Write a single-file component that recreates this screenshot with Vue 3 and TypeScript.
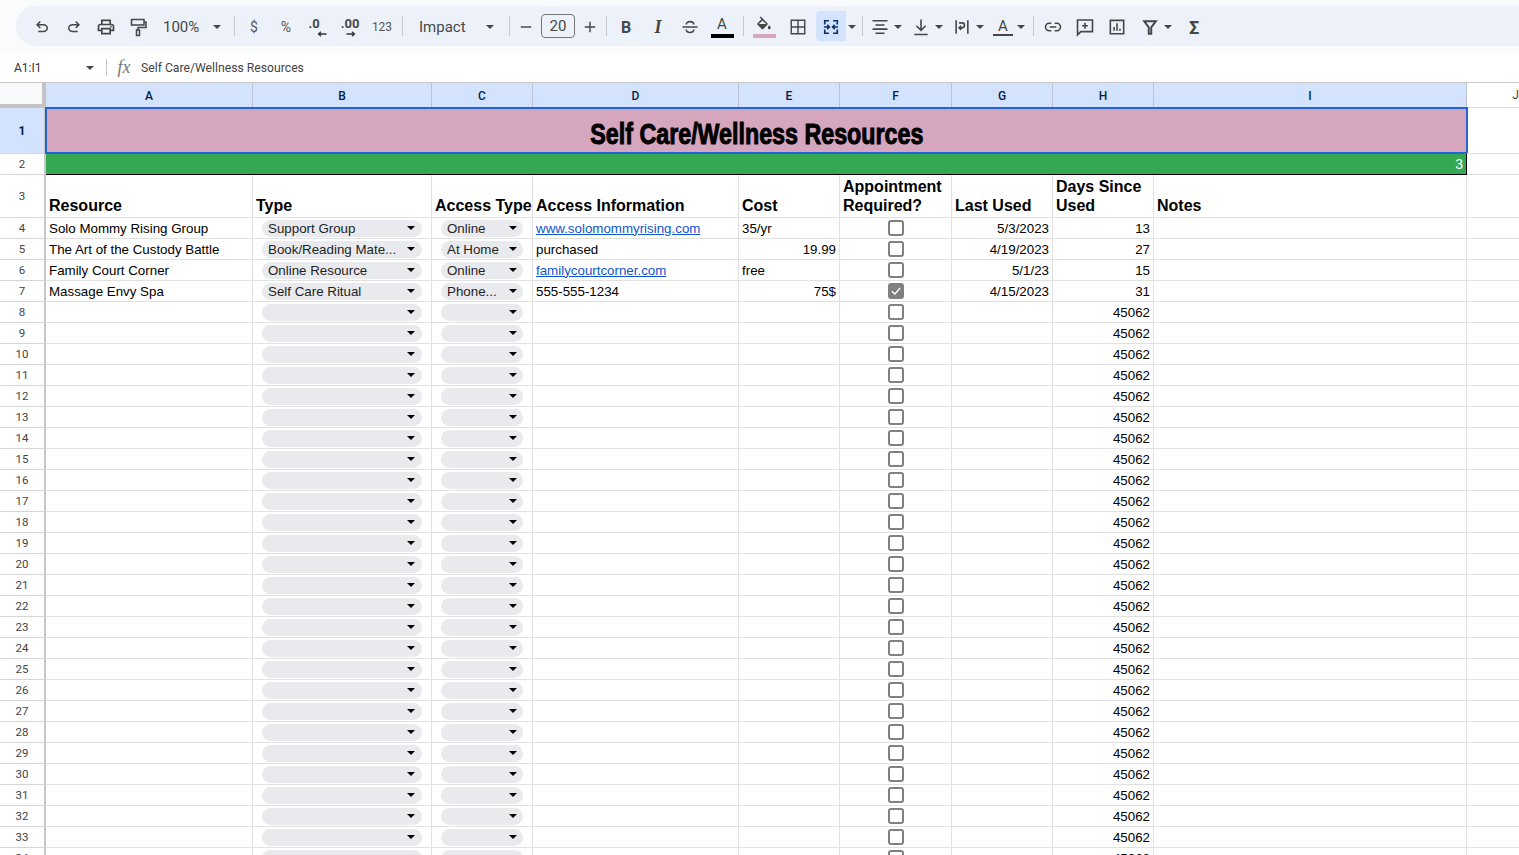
<script setup lang="ts">
interface Row {
  n: number
  a?: string
  b?: string
  c?: string
  d?: string
  link?: boolean
  e?: string
  eRight?: boolean
  checked?: boolean
  g?: string
  h: string
}

const ICON_UNDO = 'M280-200v-80h284q63 0 109.5-40T720-420q0-60-46.5-100T564-560H312l104 104-56 56-200-200 200-200 56 56-104 104h252q97 0 166.5 63T800-420q0 94-69.5 157T564-200H280Z'
const ICON_PRINT = 'M640-640v-120H320v120h-80v-200h480v200h-80Zm-480 80h640-640Zm560 100q17 0 28.5-11.5T760-500q0-17-11.5-28.5T720-540q-17 0-28.5 11.5T680-500q0 17 11.5 28.5T720-460Zm-80 260v-160H320v160h320Zm80 80H240v-160H80v-240q0-51 35-85.5t85-34.5h560q51 0 85.5 34.5T880-520v240H720v160Zm80-240v-160q0-17-11.5-28.5T760-560H200q-17 0-28.5 11.5T160-520v160h80v-80h480v80h80Z'
const ICON_FILL = 'M16.56 8.94L7.62 0 6.21 1.41l2.38 2.38-5.15 5.15c-.59.59-.59 1.54 0 2.12l5.5 5.5c.29.29.68.44 1.06.44s.77-.15 1.06-.44l5.5-5.5c.59-.58.59-1.53 0-2.12zM5.21 10L10 5.21 14.79 10H5.21zM19 11.5s-2 2.17-2 3.5c0 1.1.9 2 2 2s2-.9 2-2c0-1.33-2-3.5-2-3.5z'

const columns = ['A', 'B', 'C', 'D', 'E', 'F', 'G', 'H', 'I', 'J']

const filled: Row[] = [
  { n: 4, a: 'Solo Mommy Rising Group', b: 'Support Group', c: 'Online', d: 'www.solomommyrising.com', link: true, e: '35/yr', g: '5/3/2023', h: '13' },
  { n: 5, a: 'The Art of the Custody Battle', b: 'Book/Reading Mate...', c: 'At Home', d: 'purchased', e: '19.99', eRight: true, g: '4/19/2023', h: '27' },
  { n: 6, a: 'Family Court Corner', b: 'Online Resource', c: 'Online', d: 'familycourtcorner.com', link: true, e: 'free', g: '5/1/23', h: '15' },
  { n: 7, a: 'Massage Envy Spa', b: 'Self Care Ritual', c: 'Phone...', d: '555-555-1234', e: '75$', eRight: true, checked: true, g: '4/15/2023', h: '31' },
]
const empty: Row[] = Array.from({ length: 27 }, (_, i) => ({ n: i + 8, h: '45062' }))
const rows: Row[] = [...filled, ...empty]
</script>

<template>
  <div class="app">
    <div class="top">
      <div class="toolbar">
        <button class="btn"><svg class="s18" viewBox="0 -960 960 960"><path class="solid" :d="ICON_UNDO" /></svg></button>
        <button class="btn"><svg class="s18 flip" viewBox="0 -960 960 960"><path class="solid" :d="ICON_UNDO" /></svg></button>
        <button class="btn"><svg class="s20" viewBox="0 -960 960 960"><path class="solid" :d="ICON_PRINT" /></svg></button>
        <button class="btn">
          <svg class="s24" viewBox="0 0 24 24"><path class="line fine" d="M5.500 4.500h12.500v5.500H5.500zM18 7h2v5.500h-8v2.500M10.500 15h3v5.500h-3z" /></svg>
        </button>
        <div class="select zoom"><span>100%</span><i class="caret" /></div>
        <span class="sep" />
        <button class="btn label">$</button>
        <button class="btn label">%</button>
        <button class="btn dec dec-less"><span>.0</span><svg viewBox="0 0 10 6"><path class="line thin" d="M9.500 3H1.500M4 .8 1.500 3 4 5.200" /></svg></button>
        <button class="btn dec"><span>.00</span><svg viewBox="0 0 10 6"><path class="line thin" d="M.5 3h8M6 .8 8.500 3 6 5.200" /></svg></button>
        <button class="btn label small">123</button>
        <span class="sep" />
        <div class="select font"><span>Impact</span><i class="caret" /></div>
        <span class="sep" />
        <button class="step"><svg class="s18" viewBox="0 0 24 24"><path class="line" d="M5 12h14" /></svg></button>
        <div class="size">20</div>
        <button class="step"><svg class="s18" viewBox="0 0 24 24"><path class="line" d="M5 12h14M12 5v14" /></svg></button>
        <span class="sep tight" />
        <button class="btn glyph bold">B</button>
        <button class="btn glyph italic">I</button>
        <button class="btn"><svg class="s20" viewBox="0 0 24 24"><path class="line" d="M3 12h18M7.500 9c0-2 2-3.500 4.500-3.500s4.500 1.500 4.500 3.500M7.500 15c0 2 2 3.500 4.500 3.500s4.500-1.500 4.500-3.500" /></svg></button>
        <button class="btn colored"><span class="color-a">A</span><i class="bar black" /></button>
        <span class="sep wide" />
        <button class="btn colored"><svg class="s18" viewBox="0 0 24 20"><path class="solid" :d="ICON_FILL" /></svg><i class="bar pink" /></button>
        <button class="btn borders"><svg class="s18" viewBox="0 0 24 24"><path class="line" d="M3 3h18v18H3zM12 3v18M3 12h18" /></svg></button>
        <button class="merge"><svg class="s20" viewBox="0 0 24 24"><path class="line navy" d="M9.500 4.500H4.500v4.500M4.500 15v4.500h5M14.500 4.500h5v4.500M19.500 15v4.500h-5M3.500 12h6.500M7.500 9.500 10 12l-2.500 2.500M20.500 12H14M16.500 9.500 14 12l2.500 2.500" /></svg></button>
        <button class="caret-btn"><i class="caret" /></button>
        <span class="sep flush" />
        <button class="menu"><svg class="s20" viewBox="0 0 24 24"><path class="line" d="M3 4.500h18M6.500 9.500h11M3 14.500h18M6.500 19.500h11" /></svg><i class="caret" /></button>
        <button class="menu"><svg class="s20" viewBox="0 0 24 24"><path class="line" d="M12 3v13M6.500 10.500 12 16l5.500-5.500M4 21h16" /></svg><i class="caret" /></button>
        <button class="menu"><svg class="s20" viewBox="0 0 24 24"><path class="line" d="M5 4v16M19 4v16M8.500 7H12a3 3 0 0 1 0 6H9M11 10.500 8.500 13l2.500 2.500" /></svg><i class="caret" /></button>
        <button class="menu"><span class="rotate">A</span><i class="caret" /></button>
        <span class="sep last" />
        <button class="btn"><svg class="s20" viewBox="0 0 24 24"><path class="line" d="M10 7.500H7.500a4.500 4.500 0 0 0 0 9H10M14 7.500h2.500a4.500 4.500 0 0 1 0 9H14M8 12h8" /></svg></button>
        <button class="btn"><svg class="s20" viewBox="0 0 24 24"><path class="line" d="M3 3.500h18v14H7l-4 4zM12 7v7M8.500 10.500h7" /></svg></button>
        <button class="btn"><svg class="s20" viewBox="0 0 24 24"><path class="line" d="M4 4h16v16H4zM8.500 16.500V12M12 16.500v-9M15.500 16.500V14" /></svg></button>
        <button class="menu"><svg class="s20" viewBox="0 0 24 24"><path class="line heavy" d="M5 5h14l-5.500 7.500V20h-3v-7.500z" /></svg><i class="caret" /></button>
        <button class="btn glyph sigma">Σ</button>
      </div>
    </div>

    <div class="formula">
      <div class="namebox"><span>A1:I1</span><i class="caret" /></div>
      <span class="formula-sep" />
      <span class="fx">fx</span>
      <span class="formula-text">Self Care/Wellness Resources</span>
    </div>

    <div class="sheet">
      <div class="grid head">
        <div class="corner" />
        <div v-for="c in columns" :key="c" class="col-head" :class="{ off: c === 'J' }">{{ c }}</div>
      </div>

      <div class="grid r1">
        <div class="row-head active">1</div>
        <div class="title-cell"><span class="title">Self Care/Wellness Resources</span></div>
        <div class="cell" />
      </div>

      <div class="grid r2">
        <div class="row-head">2</div>
        <div class="green-cell">3</div>
        <div class="cell" />
      </div>

      <div class="grid r3">
        <div class="row-head">3</div>
        <div class="cell th">Resource</div>
        <div class="cell th">Type</div>
        <div class="cell th">Access Type</div>
        <div class="cell th">Access Information</div>
        <div class="cell th">Cost</div>
        <div class="cell th">Appointment<br />Required?</div>
        <div class="cell th">Last Used</div>
        <div class="cell th">Days Since<br />Used</div>
        <div class="cell th">Notes</div>
        <div class="cell" />
      </div>

      <div v-for="r in rows" :key="r.n" class="grid row">
        <div class="row-head">{{ r.n }}</div>
        <div class="cell">{{ r.a }}</div>
        <div class="cell chip-cell"><div class="chip chip-b"><span>{{ r.b }}</span><i class="caret dark" /></div></div>
        <div class="cell chip-cell"><div class="chip chip-c"><span>{{ r.c }}</span><i class="caret dark" /></div></div>
        <div class="cell"><a v-if="r.link" class="link">{{ r.d }}</a><template v-else>{{ r.d }}</template></div>
        <div class="cell" :class="{ right: r.eRight }">{{ r.e }}</div>
        <div class="cell center">
          <span class="check" :class="{ on: r.checked }">
            <svg v-if="r.checked" viewBox="0 0 16 16"><path d="M2.500 8.200 6.500 12 13.500 4" /></svg>
          </span>
        </div>
        <div class="cell right">{{ r.g }}</div>
        <div class="cell right">{{ r.h }}</div>
        <div class="cell" />
        <div class="cell" />
      </div>
    </div>
  </div>
</template>

<style scoped>
.app {
  width: 1519px;
  height: 855px;
  overflow: hidden;
  background: #fff;
  font-family: "Liberation Sans", Arial, sans-serif;
  color: #000;
}

/* toolbar */
.top {
  height: 53px;
  box-sizing: border-box;
  padding: 6px 0 7px 16px;
  background: #f9fbfd;
}
.toolbar {
  height: 40px;
  box-sizing: border-box;
  padding-left: 10px;
  display: flex;
  align-items: center;
  background: #edf2fa;
  border-radius: 20px 0 0 20px;
  color: #444746;
  font-family: Roboto, sans-serif;
}
button {
  border: 0;
  padding: 0;
  margin: 0;
  background: none;
  color: inherit;
  font: inherit;
}
.btn {
  flex: none;
  box-sizing: border-box;
  width: 32px;
  height: 30px;
  padding-top: 2px;
  display: flex;
  align-items: center;
  justify-content: center;
}
.s18 { width: 18px; height: 18px; display: block; }
.s20 { width: 20px; height: 20px; display: block; }
.s24 { width: 24px; height: 24px; display: block; }
.flip { transform: scaleX(-1); }
.solid { fill: #444746; }
.line {
  fill: none;
  stroke: #444746;
  stroke-width: 1.900;
}
.line.fine { stroke-width: 1.500; }
.line.thin { stroke-width: 1.300; stroke: #333; }
.line.heavy { stroke-width: 2.300; }
.line.navy { stroke: #0b2f6b; stroke-width: 2; }
.caret {
  display: block;
  flex: none;
  width: 0;
  height: 0;
  border-left: 4px solid transparent;
  border-right: 4px solid transparent;
  border-top: 4px solid #444746;
}
.caret.dark { border-top-color: #000; }
.select {
  flex: none;
  box-sizing: border-box;
  height: 30px;
  padding-top: 2px !important;
  display: flex;
  align-items: center;
  justify-content: space-between;
  font-size: 15px;
}
.zoom { width: 76px; padding: 0 9px; }
.font { width: 99px; padding: 0 11px 0 13px; }
.sep {
  flex: none;
  width: 1px;
  height: 20px;
  margin: 0 3px 0 4px;
  background: #c7c9cc;
}
.sep.tight { margin: 0 3px; }
.sep.wide { margin: 0 4px 0 5px; }
.sep.flush { margin: 0 0 0 4px; }
.sep.last { margin: 0 3px 0 6px; }
.label { font-size: 14px; color: #555; }
.label.small { font-size: 12px; }
.dec {
  flex-direction: column;
  font-size: 13px;
  font-weight: 700;
  line-height: 11px;
  color: #444746;
}
.dec svg { width: 10px; height: 6px; display: block; margin: 2px 0 0 2px; }
.dec-less span { margin-right: 8px; }
.dec-less svg { margin-left: 8px; }
.step {
  flex: none;
  box-sizing: border-box;
  width: 26px;
  height: 30px;
  padding-top: 2px;
  display: flex;
  align-items: center;
  justify-content: center;
}
.size {
  flex: none;
  box-sizing: border-box;
  width: 34px;
  height: 24px;
  margin: 0 2px;
  border: 1px solid #747775;
  border-radius: 4px;
  display: flex;
  align-items: center;
  justify-content: center;
  font-size: 15px;
}
.glyph { font-size: 16px; }
.bold { font-weight: 700; font-family: Roboto, sans-serif; }
.italic {
  font: italic 700 18px "Liberation Serif", serif;
}
.sigma { margin-left: 4px; font-size: 18px; font-weight: 700; }
.colored {
  flex-direction: column;
  justify-content: flex-start;
  padding-top: 4px;
}
.color-a { font-size: 15px; line-height: 18px; font-weight: 400; }
.bar { display: block; width: 23px; height: 4px; margin-top: 1px; }
.bar.black { background: #000; }
.bar.pink { background: #d5a6bd; }
.borders { margin-left: 2px; }
.merge {
  flex: none;
  box-sizing: border-box;
  width: 30px;
  height: 30px;
  margin-left: 2px;
  padding-top: 2px;
  display: flex;
  align-items: center;
  justify-content: center;
  background: #d3e3fd;
  border-radius: 4px 0 0 4px;
}
.caret-btn {
  flex: none;
  box-sizing: border-box;
  width: 12px;
  height: 30px;
  padding-top: 2px;
  display: flex;
  align-items: center;
  justify-content: center;
}
.menu {
  flex: none;
  width: 41px;
  height: 30px;
  box-sizing: border-box;
  padding: 2px 0 0 7px;
  display: flex;
  align-items: center;
}
.menu .caret { margin-left: 4px; }
.rotate {
  width: 20px;
  text-align: center;
  font-size: 15px;
  line-height: 16px;
  font-weight: 400;
  border-bottom: 2px solid #444746;
  box-sizing: border-box;
  padding: 0 3px;
}

/* formula bar */
.formula {
  height: 30px;
  box-sizing: border-box;
  border-bottom: 1px solid #c7c7c7;
  display: flex;
  align-items: center;
  background: #fff;
  font-family: Roboto, sans-serif;
}
.namebox {
  flex: none;
  box-sizing: border-box;
  width: 106px;
  padding: 0 12px 0 14px;
  display: flex;
  align-items: center;
  justify-content: space-between;
  font-size: 12px;
  color: #333;
}
.formula-sep { flex: none; width: 1px; height: 17px; background: #c7c7c7; }
.fx {
  flex: none;
  width: 34px;
  text-align: center;
  font: italic 18px "Liberation Serif", serif;
  color: #777;
}
.formula-text { font-size: 12.200px; color: #444; }

/* grid */
.sheet { width: 1564px; }
.grid {
  display: grid;
  grid-template-columns: 46px 207px 179px 101px 206px 101px 112px 101px 101px 313px 97px;
}
.head { height: 25px; }
.r1 { height: 46px; }
.r2 { height: 21px; }
.r3 { height: 43px; }
.row { height: 21px; }

.corner {
  box-sizing: border-box;
  background: #f8f9fa;
  border-right: 4px solid #c4c4c4;
  border-bottom: 4px solid #c4c4c4;
}
.col-head {
  display: flex;
  align-items: center;
  justify-content: center;
  box-sizing: border-box;
  background: #d3e3fd;
  border-right: 1px solid #b9c3d2;
  font-family: Roboto, sans-serif;
  font-size: 12px;
  font-weight: 500;
  color: #041e49;
}
.col-head.off {
  background: #fff;
  border-right: 0;
  border-bottom: 1px solid #e1e1e1;
  font-weight: 400;
  color: #444;
}
.row-head {
  display: flex;
  align-items: center;
  justify-content: center;
  box-sizing: border-box;
  background: #fff;
  border-right: 2px solid #c7c7c7;
  border-bottom: 1px solid #d5d5d5;
  font-family: Roboto, sans-serif;
  font-size: 11.500px;
  color: #444;
}
.row-head.active {
  background: #d3e3fd;
  font-weight: 700;
  font-size: 12px;
  color: #041e49;
}
.cell {
  box-sizing: border-box;
  min-width: 0;
  padding: 0 3px;
  border-right: 1px solid #e1e1e1;
  border-bottom: 1px solid #e1e1e1;
  display: flex;
  align-items: center;
  font-size: 13.330px;
  white-space: nowrap;
  overflow: hidden;
}
.cell.right { justify-content: flex-end; }
.cell.center { justify-content: center; }
.r3 .th {
  display: flex;
  flex-direction: column;
  justify-content: flex-end;
  align-items: flex-start;
  padding-top: 2px;
  padding-bottom: 2px;
  font-size: 16px;
  font-weight: 700;
  line-height: 19px;
  overflow: visible;
}
.title-cell {
  grid-column: 2 / span 9;
  box-sizing: border-box;
  margin: -1px -1px 0 -1px;
  display: flex;
  align-items: center;
  justify-content: center;
  background: #d5a6bd;
  border: 2px solid #1f66d4;
  overflow: hidden;
}
.title {
  display: block;
  font-family: "Liberation Sans", sans-serif;
  font-size: 30px;
  font-weight: 700;
  line-height: 1;
  white-space: nowrap;
  -webkit-text-stroke: 1px #000;
  transform: translateY(3px) scaleX(0.775);
}
.green-cell {
  grid-column: 2 / span 9;
  box-sizing: border-box;
  padding-right: 3px;
  display: flex;
  align-items: center;
  justify-content: flex-end;
  background: #34a853;
  border-right: 1px solid #000;
  border-bottom: 1px solid #000;
  font-size: 14px;
  color: #fff;
}
.chip-cell { padding: 0; }
.chip {
  box-sizing: border-box;
  height: 17px;
  display: flex;
  align-items: center;
  justify-content: space-between;
  border-radius: 9px;
  background: #e8eaed;
  color: #1f1f1f;
  overflow: hidden;
}
.chip-b { width: 160px; margin-left: 9px; padding: 0 7px 0 6px; }
.chip-c { width: 82px; margin-left: 9px; padding: 0 6px 0 6px; }
.link { color: #1155cc; text-decoration: underline; }
.check {
  box-sizing: border-box;
  width: 16px;
  height: 16px;
  border: 2px solid #808080;
  border-radius: 3px;
  display: block;
}
.check.on { background: #808080; }
.check svg { display: block; width: 12px; height: 12px; }
.check path { fill: none; stroke: #fff; stroke-width: 1.800; }
</style>
